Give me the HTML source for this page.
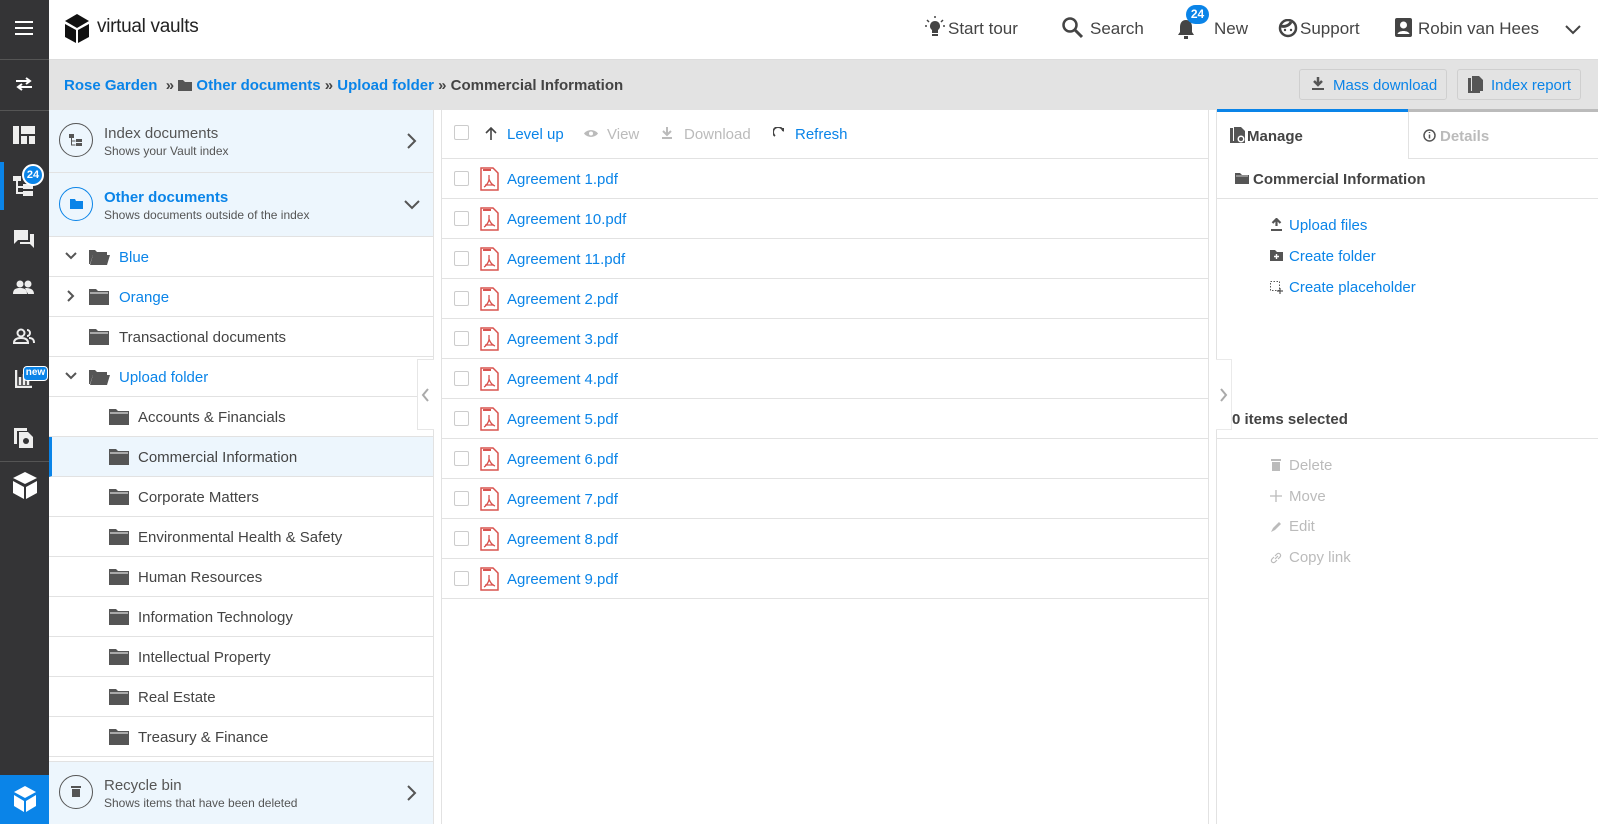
<!DOCTYPE html>
<html><head><meta charset="utf-8"><style>
*{box-sizing:border-box;margin:0;padding:0}
body{width:1598px;height:824px;overflow:hidden;font-family:"Liberation Sans",Arial,sans-serif;background:#fff;position:relative;color:#444;font-size:15px}
.a{position:absolute}
.blue{color:#0a84e8}
.side{left:0;top:0;width:49px;height:824px;background:#343436}
.hdr{left:49px;top:0;width:1549px;height:60px;background:#fff;border-bottom:1px solid #ddd}
.bc{left:49px;top:60px;width:1549px;height:50px;background:#e3e3e3}
.row{position:absolute;left:49px;width:384px;height:40px;border-bottom:1px solid #e2e2e2;background:#fff}
.row span{position:absolute;top:12px;font-size:15px}
.fold{position:absolute;top:12px;width:21px;height:16px}
.mrow{position:absolute;left:441px;width:767px;height:40px;border-bottom:1px solid #e2e2e2}
.cb{position:absolute;width:15px;height:15px;border:1px solid #ccc;border-radius:2px;background:#fff}
.btn{position:absolute;top:69px;height:31px;border:1px solid #cfcfcf;border-radius:3px;background:#e3e3e3;font-size:15px;color:#0a84e8;padding:7px 0 0 33px;white-space:nowrap}
</style></head><body>
<div class="a side"></div>
<div class="a" style="left:15px;top:21px;width:18px;height:2px;background:#fff;box-shadow:0 6px 0 #fff,0 12px 0 #fff"></div>
<div class="a" style="left:0;top:59px;width:49px;height:1px;background:#555"></div>
<div class="a" style="left:0;top:110px;width:49px;height:1px;background:#555"></div>
<svg class="a" style="left:14px;top:77px" width="20" height="14"><path d="M2 4h14M12 1l4 3-4 3M18 10H4M8 7l-4 3 4 3" stroke="#fff" stroke-width="2" fill="none"/></svg>
<svg class="a" style="left:13px;top:126px" width="22" height="18"><rect x="0" y="0" width="6" height="18" fill="#eee"/><rect x="8" y="0" width="14" height="8" fill="#eee"/><rect x="8" y="10" width="6" height="8" fill="#eee"/><rect x="16" y="10" width="6" height="8" fill="#eee"/></svg>
<div class="a" style="left:0;top:162px;width:4px;height:48px;background:#0a84e8"></div>
<svg class="a" style="left:13px;top:175px" width="22" height="22"><rect x="0" y="1" width="8" height="5" fill="#eee"/><path d="M4 6v12h6M4 12h6" stroke="#eee" stroke-width="2" fill="none"/><rect x="10" y="9" width="10" height="5" fill="#eee"/><rect x="10" y="16" width="10" height="5" fill="#eee"/></svg>
<div class="a" style="left:22px;top:164px;width:22px;height:22px;border-radius:11px;background:#0a84e8;border:2px solid #fff;color:#fff;font-size:11px;font-weight:bold;text-align:center;line-height:18px">24</div>
<svg class="a" style="left:14px;top:230px" width="20" height="18"><path d="M0 0h14v10H4l-4 4z" fill="#eee"/><path d="M16 4h4v14l-4-4H6v-2h10z" fill="#eee"/></svg>
<svg class="a" style="left:13px;top:280px" width="22" height="14"><circle cx="7" cy="4" r="3.5" fill="#eee"/><circle cx="15" cy="4" r="3.5" fill="#eee"/><path d="M0 14c0-5 3-6 7-6s7 1 7 6zM12 8c5 0 9 1 9 6h-6" fill="#eee"/></svg>
<svg class="a" style="left:13px;top:328px" width="22" height="16"><circle cx="8" cy="5" r="3.5" stroke="#eee" stroke-width="2" fill="none"/><path d="M1 15c0-4 3-5 7-5s7 1 7 5zM14 2a3 3 0 010 6M16 10c3 0 5 1 5 5" stroke="#eee" stroke-width="2" fill="none"/></svg>
<svg class="a" style="left:15px;top:370px" width="18" height="18"><path d="M1 0v17h16M5 7v8M9 4v11M13 9v6" stroke="#eee" stroke-width="2.5" fill="none"/></svg>
<div class="a" style="left:23px;top:366px;width:25px;height:15px;border-radius:4px;background:#0a84e8;border:1px solid #fff;color:#fff;font-size:10px;font-weight:bold;text-align:center;line-height:12px">new</div>
<svg class="a" style="left:13px;top:426px" width="22" height="22"><path d="M1 3v15h3V5h10V2H1z" fill="#eee"/><path d="M6 6h9l5 5v11H6z" fill="#eee"/><circle cx="13" cy="15" r="3" fill="#343436"/></svg>
<div class="a" style="left:0;top:461px;width:49px;height:1px;background:#555"></div>
<svg class="a" style="left:12px;top:472px" width="26" height="28"><path d="M13 0l12 6-12 6L1 6z" fill="#fff"/><path d="M1 9l11 6v12L1 21z" fill="#fff"/><path d="M25 9l-11 6v12l11-6z" fill="#fff"/></svg>
<div class="a" style="left:0;top:775px;width:49px;height:49px;background:#0a84e8"></div>
<svg class="a" style="left:12px;top:786px" width="26" height="28"><path d="M13 0l11 6-11 6L2 6z" fill="#fff"/><path d="M2 9l10 6v11L2 20z" fill="#fff"/><path d="M24 9l-10 6v11l10-6z" fill="#fff"/></svg>

<div class="a hdr"></div>
<svg class="a" style="left:65px;top:14px" width="25" height="30"><path d="M12 0l12 7-12 7L0 7z" fill="#111"/><path d="M0 10l11 6v13L0 23z" fill="#111"/><path d="M24 10l-11 6v13l11-6z" fill="#111"/></svg>
<div class="a" style="left:97px;top:16px;font-size:19px;color:#222;letter-spacing:-0.3px">virtual vaults</div>
<svg class="a" style="left:925px;top:16px" width="20" height="22"><path d="M10 5a5 5 0 00-3 9v3h6v-3a5 5 0 00-3-9z" fill="#444"/><rect x="7" y="18" width="6" height="2" fill="#444"/><path d="M10 0v2M2 4l2 2M18 4l-2 2M0 10h2M18 10h2" stroke="#444" stroke-width="1.5"/></svg>
<div class="a" style="left:948px;top:19px;font-size:17px;color:#444">Start tour</div>
<svg class="a" style="left:1062px;top:17px" width="22" height="22"><circle cx="8" cy="8" r="6.5" stroke="#444" stroke-width="2.5" fill="none"/><path d="M13 13l7 7" stroke="#444" stroke-width="3"/></svg>
<div class="a" style="left:1090px;top:19px;font-size:17px;color:#444">Search</div>
<svg class="a" style="left:1177px;top:18px" width="18" height="21"><path d="M9 2c-4 0-6 3-6 7v5l-2 3h16l-2-3V9c0-4-2-7-6-7z" fill="#444"/><rect x="7" y="18" width="4" height="3" fill="#444"/></svg>
<div class="a" style="left:1214px;top:19px;font-size:17px;color:#444">New</div>
<div class="a" style="left:1186px;top:5px;width:23px;height:19px;border-radius:10px;background:#0a84e8;color:#fff;font-size:12px;font-weight:bold;text-align:center;line-height:19px">24</div>
<svg class="a" style="left:1278px;top:19px" width="20" height="19"><circle cx="10" cy="9" r="8" stroke="#444" stroke-width="2.5" fill="none"/><path d="M3 7c3 1 8 0 10-4" stroke="#444" stroke-width="3" fill="none"/><circle cx="7" cy="11" r="1.2" fill="#444"/><circle cx="13" cy="11" r="1.2" fill="#444"/></svg>
<div class="a" style="left:1300px;top:19px;font-size:17px;color:#444">Support</div>
<svg class="a" style="left:1395px;top:18px" width="17" height="19"><rect x="0" y="0" width="17" height="19" rx="2" fill="#444"/><circle cx="8.5" cy="7" r="3.5" fill="#fff"/><path d="M2.5 16c1-4 11-4 12 0z" fill="#fff"/></svg>
<div class="a" style="left:1418px;top:19px;font-size:17px;color:#444">Robin van Hees</div>
<svg class="a" style="left:1565px;top:25px" width="16" height="10"><path d="M1 1l7 7 7-7" stroke="#444" stroke-width="2" fill="none"/></svg>

<div class="a bc"></div>
<div class="a" style="left:64px;top:77px;font-size:15px;font-weight:bold;color:#444;white-space:nowrap"><span class="blue">Rose Garden</span>&nbsp;&nbsp;»&nbsp;<svg width="14" height="11" style="vertical-align:-1px"><path d="M0 0h5l2 2h7v9H0z" fill="#555"/></svg> <span class="blue">Other documents</span> » <span class="blue">Upload folder</span> » Commercial Information</div>
<div class="btn" style="left:1299px;width:148px">Mass download</div>
<svg class="a" style="left:1312px;top:77px" width="12" height="13"><path d="M6 0v7M2 4l4 4 4-4" stroke="#555" stroke-width="2.5" fill="none"/><rect x="0" y="11" width="12" height="2" fill="#555"/></svg>
<div class="btn" style="left:1457px;width:124px">Index report</div>
<svg class="a" style="left:1468px;top:76px" width="16" height="17"><path d="M0 2h3v13h9v2H0z" fill="#555"/><path d="M4 0h7l4 4v11H4z" fill="#555"/></svg>

<div class="a" style="left:49px;top:110px;width:385px;height:714px;border-right:1px solid #e2e2e2;background:#fff"></div>
<div class="a" style="left:49px;top:110px;width:384px;height:63px;background:#edf6fd;border-bottom:1px solid #e2e2e2"></div>
<div class="a" style="left:59px;top:123px;width:34px;height:34px;border:1px solid #555;border-radius:17px"></div>
<svg class="a" style="left:69px;top:134px" width="14" height="13"><rect x="0" y="0" width="5" height="4" fill="#555"/><path d="M2.5 4v7h4M2.5 7h4" stroke="#555" fill="none"/><rect x="7" y="5" width="6" height="3" fill="#555"/><rect x="7" y="9" width="6" height="3" fill="#555"/></svg>
<div class="a" style="left:104px;top:125px;font-size:15px;color:#555">Index documents</div>
<div class="a" style="left:104px;top:144px;font-size:12px;color:#555">Shows your Vault index</div>
<svg class="a" style="left:407px;top:133px" width="10" height="16"><path d="M1 1l7 7-7 7" stroke="#555" stroke-width="2" fill="none"/></svg>
<div class="a" style="left:49px;top:173px;width:384px;height:64px;background:#edf6fd;border-bottom:1px solid #e2e2e2"></div>
<div class="a" style="left:59px;top:187px;width:34px;height:34px;border:1px solid #0a84e8;border-radius:17px"></div>
<svg class="a" style="left:70px;top:199px" width="13" height="10"><path d="M0 0h5l1 2h7v8H0z" fill="#0a84e8"/></svg>
<div class="a blue" style="left:104px;top:189px;font-size:15px;font-weight:bold">Other documents</div>
<div class="a" style="left:104px;top:208px;font-size:12px;color:#555">Shows documents outside of the index</div>
<svg class="a" style="left:404px;top:200px" width="16" height="10"><path d="M1 1l7 7 7-7" stroke="#555" stroke-width="2" fill="none"/></svg>

<div class="row" style="top:237px"><svg class="a" style="left:16px;top:15px" width="12" height="8"><path d="M1 1l5 5 5-5" stroke="#555" stroke-width="2" fill="none"/></svg><svg class="fold" style="left:40px"><path d="M0 1h6l2 2h10v3H4L1 15H0z" fill="#555"/><path d="M4 6h17l-3 10H1z" fill="#555"/></svg><span class="blue" style="left:70px">Blue</span></div>
<div class="row" style="top:277px"><svg class="a" style="left:18px;top:13px" width="8" height="12"><path d="M1 1l5 5-5 5" stroke="#555" stroke-width="2" fill="none"/></svg><svg class="fold" style="left:40px"><path d="M0 0h7l2 2h11v14H0z" fill="#555"/><path d="M1 4h18" stroke="#fff"/></svg><span class="blue" style="left:70px">Orange</span></div>
<div class="row" style="top:317px"><svg class="fold" style="left:40px"><path d="M0 0h7l2 2h11v14H0z" fill="#555"/><path d="M1 4h18" stroke="#fff"/></svg><span style="left:70px">Transactional documents</span></div>
<div class="row" style="top:357px"><svg class="a" style="left:16px;top:15px" width="12" height="8"><path d="M1 1l5 5 5-5" stroke="#555" stroke-width="2" fill="none"/></svg><svg class="fold" style="left:40px"><path d="M0 1h6l2 2h10v3H4L1 15H0z" fill="#555"/><path d="M4 6h17l-3 10H1z" fill="#555"/></svg><span class="blue" style="left:70px">Upload folder</span></div>
<div class="row" style="top:397px"><svg class="fold" style="left:60px"><path d="M0 0h7l2 2h11v14H0z" fill="#555"/><path d="M1 4h18" stroke="#fff"/></svg><span style="left:89px">Accounts &amp; Financials</span></div>
<div class="row" style="top:437px;background:#edf6fd;border-left:3px solid #0a84e8"><svg class="fold" style="left:57px"><path d="M0 0h7l2 2h11v14H0z" fill="#555"/><path d="M1 4h18" stroke="#fff"/></svg><span style="left:86px">Commercial Information</span></div>
<div class="row" style="top:477px"><svg class="fold" style="left:60px"><path d="M0 0h7l2 2h11v14H0z" fill="#555"/><path d="M1 4h18" stroke="#fff"/></svg><span style="left:89px">Corporate Matters</span></div>
<div class="row" style="top:517px"><svg class="fold" style="left:60px"><path d="M0 0h7l2 2h11v14H0z" fill="#555"/><path d="M1 4h18" stroke="#fff"/></svg><span style="left:89px">Environmental Health &amp; Safety</span></div>
<div class="row" style="top:557px"><svg class="fold" style="left:60px"><path d="M0 0h7l2 2h11v14H0z" fill="#555"/><path d="M1 4h18" stroke="#fff"/></svg><span style="left:89px">Human Resources</span></div>
<div class="row" style="top:597px"><svg class="fold" style="left:60px"><path d="M0 0h7l2 2h11v14H0z" fill="#555"/><path d="M1 4h18" stroke="#fff"/></svg><span style="left:89px">Information Technology</span></div>
<div class="row" style="top:637px"><svg class="fold" style="left:60px"><path d="M0 0h7l2 2h11v14H0z" fill="#555"/><path d="M1 4h18" stroke="#fff"/></svg><span style="left:89px">Intellectual Property</span></div>
<div class="row" style="top:677px"><svg class="fold" style="left:60px"><path d="M0 0h7l2 2h11v14H0z" fill="#555"/><path d="M1 4h18" stroke="#fff"/></svg><span style="left:89px">Real Estate</span></div>
<div class="row" style="top:717px"><svg class="fold" style="left:60px"><path d="M0 0h7l2 2h11v14H0z" fill="#555"/><path d="M1 4h18" stroke="#fff"/></svg><span style="left:89px">Treasury &amp; Finance</span></div>
<div class="a" style="left:49px;top:761px;width:384px;height:63px;background:#edf6fd;border-top:1px solid #e2e2e2"></div>
<div class="a" style="left:59px;top:775px;width:34px;height:34px;border:1px solid #555;border-radius:17px"></div>
<svg class="a" style="left:71px;top:785px" width="10" height="12"><rect x="0" y="1" width="10" height="2" fill="#555"/><rect x="1" y="4" width="8" height="8" fill="#555"/></svg>
<div class="a" style="left:104px;top:777px;font-size:15px;color:#555">Recycle bin</div>
<div class="a" style="left:104px;top:796px;font-size:12px;color:#555">Shows items that have been deleted</div>
<svg class="a" style="left:407px;top:785px" width="10" height="16"><path d="M1 1l7 7-7 7" stroke="#555" stroke-width="2" fill="none"/></svg>
<div class="a" style="left:417px;top:359px;width:17px;height:71px;background:#fff;border:1px solid #e6e6e6;border-right:none"></div>
<svg class="a" style="left:421px;top:388px" width="9" height="14"><path d="M7 1L2 7l5 6" stroke="#aaa" stroke-width="2" fill="none"/></svg>

<div class="a" style="left:441px;top:110px;width:768px;height:714px;border-left:1px solid #e2e2e2;border-right:1px solid #e2e2e2"></div>
<div class="mrow" style="top:110px;height:49px"></div>
<div class="cb" style="left:454px;top:125px"></div>
<svg class="a" style="left:485px;top:127px" width="12" height="13"><path d="M6 13V2M1 6l5-5 5 5" stroke="#444" stroke-width="1.6" fill="none"/></svg>
<div class="a blue" style="left:507px;top:126px;font-size:15px">Level up</div>
<svg class="a" style="left:584px;top:129px" width="14" height="9"><path d="M0 4.5C3 0 11 0 14 4.5 11 9 3 9 0 4.5z" fill="#bbb"/><circle cx="7" cy="4.5" r="2" fill="#fff"/></svg>
<div class="a" style="left:607px;top:126px;font-size:15px;color:#bbb">View</div>
<svg class="a" style="left:662px;top:127px" width="10" height="12"><path d="M5 0v7M1 4l4 4 4-4" stroke="#bbb" stroke-width="2" fill="none"/><rect x="0" y="10" width="10" height="2" fill="#bbb"/></svg>
<div class="a" style="left:684px;top:126px;font-size:15px;color:#bbb">Download</div>
<svg class="a" style="left:773px;top:127px" width="12" height="12"><path d="M10 4A5 5 0 102 9" stroke="#444" stroke-width="1.8" fill="none"/><path d="M7 1h4v4z" fill="#444"/></svg>
<div class="a blue" style="left:795px;top:126px;font-size:15px">Refresh</div>

<div class="mrow" style="top:159px"><div class="cb" style="left:13px;top:12px"></div><svg class="a" style="left:39px;top:8px" width="19" height="24"><path d="M1 1h12l5 5v17H1z" stroke="#d9534f" stroke-width="1.5" fill="#fff"/><path d="M3 3h8" stroke="#d9534f" stroke-width="2"/><path d="M9 8v4c0 3-3 7-5 8M9 12c1 3 3 6 6 7M5 18h9" stroke="#d9534f" stroke-width="1.3" fill="none"/></svg><span class="a blue" style="left:66px;top:12px">Agreement 1.pdf</span></div>
<div class="mrow" style="top:199px"><div class="cb" style="left:13px;top:12px"></div><svg class="a" style="left:39px;top:8px" width="19" height="24"><path d="M1 1h12l5 5v17H1z" stroke="#d9534f" stroke-width="1.5" fill="#fff"/><path d="M3 3h8" stroke="#d9534f" stroke-width="2"/><path d="M9 8v4c0 3-3 7-5 8M9 12c1 3 3 6 6 7M5 18h9" stroke="#d9534f" stroke-width="1.3" fill="none"/></svg><span class="a blue" style="left:66px;top:12px">Agreement 10.pdf</span></div>
<div class="mrow" style="top:239px"><div class="cb" style="left:13px;top:12px"></div><svg class="a" style="left:39px;top:8px" width="19" height="24"><path d="M1 1h12l5 5v17H1z" stroke="#d9534f" stroke-width="1.5" fill="#fff"/><path d="M3 3h8" stroke="#d9534f" stroke-width="2"/><path d="M9 8v4c0 3-3 7-5 8M9 12c1 3 3 6 6 7M5 18h9" stroke="#d9534f" stroke-width="1.3" fill="none"/></svg><span class="a blue" style="left:66px;top:12px">Agreement 11.pdf</span></div>
<div class="mrow" style="top:279px"><div class="cb" style="left:13px;top:12px"></div><svg class="a" style="left:39px;top:8px" width="19" height="24"><path d="M1 1h12l5 5v17H1z" stroke="#d9534f" stroke-width="1.5" fill="#fff"/><path d="M3 3h8" stroke="#d9534f" stroke-width="2"/><path d="M9 8v4c0 3-3 7-5 8M9 12c1 3 3 6 6 7M5 18h9" stroke="#d9534f" stroke-width="1.3" fill="none"/></svg><span class="a blue" style="left:66px;top:12px">Agreement 2.pdf</span></div>
<div class="mrow" style="top:319px"><div class="cb" style="left:13px;top:12px"></div><svg class="a" style="left:39px;top:8px" width="19" height="24"><path d="M1 1h12l5 5v17H1z" stroke="#d9534f" stroke-width="1.5" fill="#fff"/><path d="M3 3h8" stroke="#d9534f" stroke-width="2"/><path d="M9 8v4c0 3-3 7-5 8M9 12c1 3 3 6 6 7M5 18h9" stroke="#d9534f" stroke-width="1.3" fill="none"/></svg><span class="a blue" style="left:66px;top:12px">Agreement 3.pdf</span></div>
<div class="mrow" style="top:359px"><div class="cb" style="left:13px;top:12px"></div><svg class="a" style="left:39px;top:8px" width="19" height="24"><path d="M1 1h12l5 5v17H1z" stroke="#d9534f" stroke-width="1.5" fill="#fff"/><path d="M3 3h8" stroke="#d9534f" stroke-width="2"/><path d="M9 8v4c0 3-3 7-5 8M9 12c1 3 3 6 6 7M5 18h9" stroke="#d9534f" stroke-width="1.3" fill="none"/></svg><span class="a blue" style="left:66px;top:12px">Agreement 4.pdf</span></div>
<div class="mrow" style="top:399px"><div class="cb" style="left:13px;top:12px"></div><svg class="a" style="left:39px;top:8px" width="19" height="24"><path d="M1 1h12l5 5v17H1z" stroke="#d9534f" stroke-width="1.5" fill="#fff"/><path d="M3 3h8" stroke="#d9534f" stroke-width="2"/><path d="M9 8v4c0 3-3 7-5 8M9 12c1 3 3 6 6 7M5 18h9" stroke="#d9534f" stroke-width="1.3" fill="none"/></svg><span class="a blue" style="left:66px;top:12px">Agreement 5.pdf</span></div>
<div class="mrow" style="top:439px"><div class="cb" style="left:13px;top:12px"></div><svg class="a" style="left:39px;top:8px" width="19" height="24"><path d="M1 1h12l5 5v17H1z" stroke="#d9534f" stroke-width="1.5" fill="#fff"/><path d="M3 3h8" stroke="#d9534f" stroke-width="2"/><path d="M9 8v4c0 3-3 7-5 8M9 12c1 3 3 6 6 7M5 18h9" stroke="#d9534f" stroke-width="1.3" fill="none"/></svg><span class="a blue" style="left:66px;top:12px">Agreement 6.pdf</span></div>
<div class="mrow" style="top:479px"><div class="cb" style="left:13px;top:12px"></div><svg class="a" style="left:39px;top:8px" width="19" height="24"><path d="M1 1h12l5 5v17H1z" stroke="#d9534f" stroke-width="1.5" fill="#fff"/><path d="M3 3h8" stroke="#d9534f" stroke-width="2"/><path d="M9 8v4c0 3-3 7-5 8M9 12c1 3 3 6 6 7M5 18h9" stroke="#d9534f" stroke-width="1.3" fill="none"/></svg><span class="a blue" style="left:66px;top:12px">Agreement 7.pdf</span></div>
<div class="mrow" style="top:519px"><div class="cb" style="left:13px;top:12px"></div><svg class="a" style="left:39px;top:8px" width="19" height="24"><path d="M1 1h12l5 5v17H1z" stroke="#d9534f" stroke-width="1.5" fill="#fff"/><path d="M3 3h8" stroke="#d9534f" stroke-width="2"/><path d="M9 8v4c0 3-3 7-5 8M9 12c1 3 3 6 6 7M5 18h9" stroke="#d9534f" stroke-width="1.3" fill="none"/></svg><span class="a blue" style="left:66px;top:12px">Agreement 8.pdf</span></div>
<div class="mrow" style="top:559px"><div class="cb" style="left:13px;top:12px"></div><svg class="a" style="left:39px;top:8px" width="19" height="24"><path d="M1 1h12l5 5v17H1z" stroke="#d9534f" stroke-width="1.5" fill="#fff"/><path d="M3 3h8" stroke="#d9534f" stroke-width="2"/><path d="M9 8v4c0 3-3 7-5 8M9 12c1 3 3 6 6 7M5 18h9" stroke="#d9534f" stroke-width="1.3" fill="none"/></svg><span class="a blue" style="left:66px;top:12px">Agreement 9.pdf</span></div>

<div class="a" style="left:1216px;top:110px;width:382px;height:714px;border-left:1px solid #e2e2e2"></div>
<div class="a" style="left:1217px;top:109px;width:191px;height:3px;background:#0a84e8"></div>
<div class="a" style="left:1408px;top:109px;width:190px;height:3px;background:#bbb"></div>
<div class="a" style="left:1408px;top:112px;width:190px;height:47px;border-left:1px solid #e2e2e2;border-bottom:1px solid #e2e2e2"></div>
<div class="a" style="left:1217px;top:159px;width:381px;height:40px;border-bottom:1px solid #e2e2e2"></div>
<svg class="a" style="left:1230px;top:127px" width="16" height="17"><path d="M0 1h3v13h3v2H0z" fill="#555"/><path d="M4 0h7l4 4v12H4z" fill="#555"/><circle cx="11" cy="12" r="3.5" fill="#fff"/><circle cx="11" cy="12" r="2" fill="#555"/></svg>
<div class="a" style="left:1247px;top:128px;font-size:15px;font-weight:bold;color:#444">Manage</div>
<svg class="a" style="left:1423px;top:129px" width="13" height="13"><circle cx="6.5" cy="6.5" r="5.5" stroke="#555" stroke-width="1.5" fill="none"/><path d="M6.5 5.5v4M6.5 3v1" stroke="#555" stroke-width="1.5"/></svg>
<div class="a" style="left:1440px;top:128px;font-size:15px;font-weight:bold;color:#bbb">Details</div>
<svg class="a" style="left:1235px;top:173px" width="14" height="11"><path d="M0 0h5l2 2h7v9H0z" fill="#555"/><path d="M1 3h12" stroke="#fff" stroke-width=".7"/></svg>
<div class="a" style="left:1253px;top:171px;font-size:15px;font-weight:bold;color:#444">Commercial Information</div>
<svg class="a" style="left:1271px;top:218px" width="11" height="13"><path d="M5.5 8V1M1.5 5l4-4 4 4" stroke="#555" stroke-width="2.2" fill="none"/><rect x="0" y="11" width="11" height="2" fill="#555"/></svg>
<div class="a blue" style="left:1289px;top:217px;font-size:15px">Upload files</div>
<svg class="a" style="left:1270px;top:250px" width="13" height="11"><path d="M0 0h5l2 2h6v9H0z" fill="#555"/><path d="M6.5 4v5M4 6.5h5" stroke="#fff" stroke-width="1.4"/></svg>
<div class="a blue" style="left:1289px;top:248px;font-size:15px">Create folder</div>
<svg class="a" style="left:1270px;top:281px" width="13" height="13"><rect x=".5" y=".5" width="9" height="9" stroke="#555" stroke-dasharray="1.5 1.5" fill="none"/><path d="M10 7v6M7 10h6" stroke="#555" stroke-width="1.2"/></svg>
<div class="a blue" style="left:1289px;top:279px;font-size:15px">Create placeholder</div>
<div class="a" style="left:1216px;top:359px;width:16px;height:71px;background:#fff;border:1px solid #eaeaea;border-left:none"></div>
<svg class="a" style="left:1219px;top:388px" width="9" height="14"><path d="M2 1l5 6-5 6" stroke="#aaa" stroke-width="2" fill="none"/></svg>
<div class="a" style="left:1232px;top:411px;font-size:15px;font-weight:bold;color:#444">0 items selected</div>
<div class="a" style="left:1217px;top:438px;width:381px;height:1px;background:#e2e2e2"></div>
<svg class="a" style="left:1271px;top:459px" width="10" height="12"><rect x="0" y="0" width="10" height="2" fill="#bbb"/><rect x="1" y="3" width="8" height="9" fill="#bbb"/></svg>
<div class="a" style="left:1289px;top:457px;font-size:15px;color:#bbb">Delete</div>
<svg class="a" style="left:1270px;top:490px" width="12" height="12"><path d="M6 0v12M0 6h12" stroke="#bbb" stroke-width="1.3"/></svg>
<div class="a" style="left:1289px;top:488px;font-size:15px;color:#bbb">Move</div>
<svg class="a" style="left:1270px;top:521px" width="12" height="12"><path d="M1 11l2-4 6-6 2 2-6 6z" fill="#bbb"/></svg>
<div class="a" style="left:1289px;top:518px;font-size:15px;color:#bbb">Edit</div>
<svg class="a" style="left:1270px;top:552px" width="12" height="12"><path d="M5 7l3-3M4 5L2 7a2 2 0 003 3l2-2M8 7l2-2a2 2 0 00-3-3L5 4" stroke="#bbb" stroke-width="1.2" fill="none"/></svg>
<div class="a" style="left:1289px;top:549px;font-size:15px;color:#bbb">Copy link</div>
</body></html>
